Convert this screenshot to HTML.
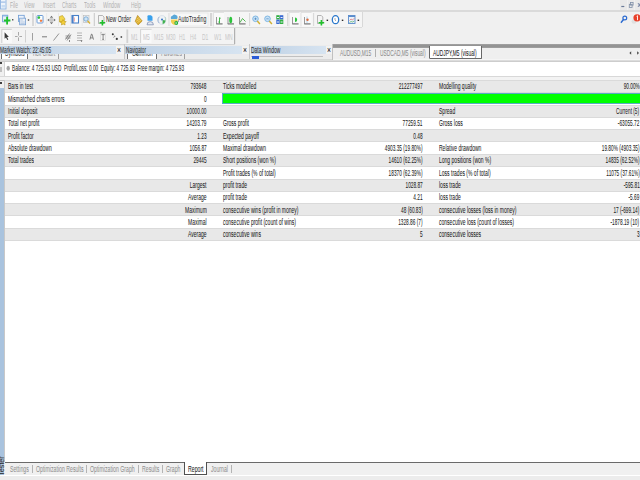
<!DOCTYPE html>
<html><head><meta charset="utf-8"><style>
html,body{margin:0;padding:0;width:640px;height:480px;overflow:hidden;background:#f0f0f0}
body>div,body>svg{position:absolute}
.t{position:absolute;white-space:nowrap;line-height:10px;-webkit-text-stroke:0.05px currentColor;font-family:"Liberation Sans",sans-serif}
</style></head><body>
<div style="left:0px;top:0px;width:640px;height:480px;background:#f0f0f0"></div>
<div style="left:0px;top:0px;width:640px;height:11px;background:#f0f0f0"></div>
<div style="left:0px;top:10px;width:640px;height:2px;background:#dadada"></div>
<svg style="left:0;top:0" width="7" height="10"><rect x="0.5" y="-0.5" width="5.5" height="9.5" fill="#eef4fb" stroke="#8fb3e0" stroke-width="0.9"/><rect x="1" y="1.5" width="4.5" height="1.2" fill="#9dbde6"/><rect x="1.5" y="5" width="3.5" height="2.5" fill="#c8dcf2"/></svg>
<div class="t" style="left:10px;top:0px;font-size:9px;color:#b0b0b0;transform:scaleX(0.54);transform-origin:0 0;-webkit-text-stroke:0">File</div>
<div class="t" style="left:24px;top:0px;font-size:9px;color:#b0b0b0;transform:scaleX(0.54);transform-origin:0 0;-webkit-text-stroke:0">View</div>
<div class="t" style="left:43px;top:0px;font-size:9px;color:#b0b0b0;transform:scaleX(0.54);transform-origin:0 0;-webkit-text-stroke:0">Insert</div>
<div class="t" style="left:62px;top:0px;font-size:9px;color:#b0b0b0;transform:scaleX(0.54);transform-origin:0 0;-webkit-text-stroke:0">Charts</div>
<div class="t" style="left:84px;top:0px;font-size:9px;color:#b0b0b0;transform:scaleX(0.54);transform-origin:0 0;-webkit-text-stroke:0">Tools</div>
<div class="t" style="left:103px;top:0px;font-size:9px;color:#b0b0b0;transform:scaleX(0.54);transform-origin:0 0;-webkit-text-stroke:0">Window</div>
<div class="t" style="left:131px;top:0px;font-size:9px;color:#b0b0b0;transform:scaleX(0.54);transform-origin:0 0;-webkit-text-stroke:0">Help</div>
<div style="left:619.5px;top:0px;width:7.5px;height:10px;background:#e9e9e9"></div>
<div style="left:627.5px;top:0px;width:6.5px;height:10px;background:#e9e9e9"></div>
<div style="left:635px;top:0px;width:5px;height:10px;background:#e9e9e9"></div>
<svg style="left:610px;top:0" width="30" height="10"><path d="M11.3 6.5h3" stroke="#6a7a98" stroke-width="1.2"/><rect x="20.5" y="2.5" width="2.6" height="2.6" fill="none" stroke="#8090a8" stroke-width="0.8"/><rect x="19.3" y="4.3" width="2.8" height="3.2" fill="none" stroke="#8090a8" stroke-width="0.8"/><path d="M28 3l2.5 4M30.5 3l-2.5 4" stroke="#7080a0" stroke-width="0.9"/></svg>
<div style="left:0px;top:12px;width:362px;height:15px;background:#f5f5f5"></div>
<div style="left:361.5px;top:12px;width:0.8px;height:15px;background:#d8d8d8"></div>
<div style="left:0px;top:27px;width:362px;height:1px;background:#dcdcdc"></div>
<div style="left:0px;top:28px;width:235px;height:16px;background:#f3f3f3"></div>
<div style="left:234px;top:28px;width:1px;height:16px;background:#b4b4b4"></div>
<div style="left:0px;top:44px;width:235px;height:1px;background:#d6d6d6"></div>
<svg style="left:0;top:0;position:absolute" width="640" height="45" viewBox="0 0 640 45"><rect x="2.6" y="15.2" width="5.2" height="6.6" fill="#e4eef8" stroke="#6a9ad4" stroke-width="0.8"/><rect x="2.6" y="15.2" width="5.2" height="1.2" fill="#8ab2e0"/><path d="M6.2 16.8h1.8v2.6h2.4v2.2h-2.4v2.9h-1.8v-2.9h-2.3v-2.2h2.3z" fill="#1fc12b"/><rect x="12" y="19.2" width="1.4" height="1.2" fill="#303030"/><rect x="18.4" y="15.3" width="5.8" height="6.2" fill="#eef3fa" stroke="#6a9ad4" stroke-width="0.8"/><rect x="19.6" y="18.2" width="6" height="6.6" fill="#e8eef6" stroke="#7aa2d4" stroke-width="0.8"/><path d="M20.3 20h2.5M20.3 22h4.5M20.3 23.6h4.5" stroke="#9ab6d8" stroke-width="0.6"/><rect x="27.8" y="19.4" width="1.4" height="1.2" fill="#303030"/><rect x="32" y="13" width="2" height="13" fill="#d9d9d9"/><rect x="35" y="13" width="0.6" height="13" fill="#e2e2e2"/><rect x="46.5" y="13" width="0.6" height="13" fill="#e2e2e2"/><rect x="58" y="13" width="0.6" height="13" fill="#e2e2e2"/><rect x="70" y="13" width="0.6" height="13" fill="#e2e2e2"/><rect x="81.8" y="13" width="0.6" height="13" fill="#e2e2e2"/><rect x="93.5" y="13" width="0.6" height="13" fill="#e2e2e2"/><rect x="37" y="15.5" width="6" height="7.5" rx="0.8" fill="#fff" stroke="#6a9ad6"/><circle cx="38.9" cy="17.6" r="1.3" fill="#2ec03a"/><path d="M41 19.2l1.5 1.5-1.5 1.5-1.5-1.5z" fill="#f07a3a"/><path d="M51.5 15.8l1.6 2h-3.2zM51.5 24.2l1.6-2h-3.2zM47.3 20l2-1.6v3.2zM55.7 20l-2-1.6v3.2z" fill="#6a6a6a"/><path d="M50 18.5l1.5-1 1.5 1v3l-1.5 1-1.5-1z" fill="#c8c8c8"/><path d="M59.5 16.5l3 -1 2.5 3.5 -2 4 -3.5 -1z" fill="#f2d54a" stroke="#b89a20" stroke-width="0.6"/><path d="M63 19.5l1.2 1.8 2 .3 -1.4 1.4 .3 2 -1.9-.9 -1.8.9 .3-2 -1.4-1.4 2-.3z" fill="#f4cf3a" stroke="#b08a10" stroke-width="0.5"/><rect x="72" y="15.5" width="6.5" height="7.5" fill="#fff" stroke="#4a80c8" stroke-width="1.1"/><rect x="72" y="15.5" width="1.6" height="7.5" fill="#4a80c8"/><path d="M74.4 17.5v4" stroke="#e05050" stroke-width="0.5"/><rect x="83.5" y="15.5" width="5.5" height="7" fill="#eef2f6" stroke="#b8b8b8" stroke-width="0.6"/><circle cx="86" cy="19" r="2.2" fill="#cfe4f4" stroke="#6aa0d0" stroke-width="0.8"/><path d="M87.5 20.7l2.5 2.8" stroke="#d8b030" stroke-width="1.3"/><rect x="94" y="13" width="0.8" height="13" fill="#c8c8c8"/><path d="M98.5 15.5h4l1.5 1.5v6.5h-5.5z" fill="#f4f4f4" stroke="#9a9a9a" stroke-width="0.7"/><path d="M101.6 20h1.6v2h2v1.6h-2v2h-1.6v-2h-2v-1.6h2z" fill="#1fc12b"/><path d="M137.6 15.4l4.6 5.6-4.1 3.9-2.9-3.6z" fill="#dcae2c" stroke="#b08418" stroke-width="0.6"/><path d="M136.6 19.2l2.6-1.8M136.2 21.2l3.9-2.2M137.4 22.6l3.6-2.4" stroke="#f6dc88" stroke-width="0.6"/><path d="M147.5 16.2q0-1 1-1h2.5l1.5 1.5v4h-5z" fill="#38a0ec"/><path d="M147 24.8q0-3.2 3.2-3.2t3.2 3.2z" fill="#e4e8f0" stroke="#8090b4" stroke-width="0.8"/><ellipse cx="162" cy="20" rx="3.8" ry="4.4" fill="#eef2f6" stroke="#c4d0dc" stroke-width="0.5"/><path d="M159.2 17a4 4 0 0 0 0 6" stroke="#90aad0" stroke-width="0.8" fill="none"/><path d="M162.6 20v4.2q2.6-.6 3.2-3.6z" fill="#40b050"/><path d="M165 17a4 4 0 0 1 .6 3" stroke="#a0c8b0" stroke-width="0.7" fill="none"/><circle cx="162" cy="19.6" r="1" fill="#3070c0"/><rect x="168.5" y="13" width="0.8" height="13" fill="#dadada"/><rect x="170" y="13" width="38" height="13" fill="#f8f8f8" stroke="#e2e2e2" stroke-width="0.6"/><path d="M171 19q-.8-3 1.8-3.5 1.2-1.8 3 -.6 2 .2 1.8 2.6 .2 1.2-1 1.5z" fill="#5aa8d8"/><path d="M171 19.5h6.5v2.5q-1 2.6-3.2 3 -2.3-.4-3.3-3z" fill="#f0d050"/><circle cx="176.3" cy="23" r="1.9" fill="#22b03a"/><path d="M175.7 22v2l1.4-1z" fill="#fff"/><rect x="210" y="13" width="2.2" height="13" fill="#d6d6d6"/><rect x="213.5" y="12.5" width="10.5" height="14" fill="#f9f9f9"/><path d="M213.5 26.5v-14h10.5" stroke="#dcdcdc" stroke-width="0.8" fill="none"/><path d="M216.5 17v7h6" stroke="#707070" stroke-width="0.7" fill="none"/><path d="M216.0 23.8h6.5" stroke="#8a8a8a" stroke-width="1"/><path d="M219.5 17.5v6M219.5 18.2h1.2M218.3 22h1.2" stroke="#30b83a" stroke-width="0.9"/><path d="M228 17v7h6" stroke="#707070" stroke-width="0.7" fill="none"/><path d="M227.5 23.8h6.5" stroke="#8a8a8a" stroke-width="1"/><ellipse cx="230.7" cy="20" rx="1.5" ry="3.3" fill="#2cc43c"/><path d="M239.5 17v7h6" stroke="#707070" stroke-width="0.7" fill="none"/><path d="M239.0 23.8h6.5" stroke="#8a8a8a" stroke-width="1"/><path d="M240 22.5l2.5-4 3 3" stroke="#40b040" stroke-width="0.9" fill="none"/><rect x="249.3" y="13" width="0.8" height="13" fill="#cfcfcf"/><circle cx="255.5" cy="18.8" r="2.8" fill="#c8e2f6" stroke="#6aaadc" stroke-width="0.8"/><path d="M257.3 21l2.6 3" stroke="#d0b030" stroke-width="1.4"/><circle cx="267.5" cy="18.8" r="2.8" fill="#c8e2f6" stroke="#6aaadc" stroke-width="0.8"/><path d="M269.3 21l2.6 3" stroke="#d0b030" stroke-width="1.4"/><path d="M254.3 18.8h2.4M255.5 17.6v2.4" stroke="#3a7ab8" stroke-width="0.6"/><path d="M266.3 18.8h2.4" stroke="#3a7ab8" stroke-width="0.6"/><rect x="276.3" y="15.2" width="3.4" height="4.2" fill="#30b040"/><rect x="279.9" y="15.2" width="3.4" height="4.2" fill="#3a6ad0"/><rect x="276.3" y="19.6" width="3.4" height="4.4" fill="#3a6ad0"/><rect x="279.9" y="19.6" width="3.4" height="4.4" fill="#30b040"/><path d="M277 17.5h2M280.6 17.5h2M277 22h2M280.6 22h2" stroke="#e8f0ff" stroke-width="1"/><rect x="287.3" y="13" width="0.8" height="13" fill="#cfcfcf"/><rect x="289" y="12.5" width="10.5" height="14" fill="#f9f9f9"/><path d="M289 26.5v-14h10.5" stroke="#dcdcdc" stroke-width="0.8" fill="none"/><rect x="301" y="12.5" width="10.5" height="14" fill="#f9f9f9"/><path d="M301 26.5v-14h10.5" stroke="#dcdcdc" stroke-width="0.8" fill="none"/><path d="M292.5 17v7h6" stroke="#707070" stroke-width="0.7" fill="none"/><path d="M292.0 23.8h6.5" stroke="#8a8a8a" stroke-width="1"/><path d="M295 17.5a2.2 2.2 0 0 1 0 4.4z" fill="#2cc43c"/><path d="M304.5 17v7h6" stroke="#707070" stroke-width="0.7" fill="none"/><path d="M304.0 23.8h6.5" stroke="#8a8a8a" stroke-width="1"/><rect x="306" y="16.5" width="2" height="6.5" fill="#d6e6f2"/><circle cx="307.5" cy="19.8" r="1.2" fill="#e06a3a"/><rect x="313.3" y="13" width="0.8" height="13" fill="#cfcfcf"/><path d="M317.5 15.5h3.8l1.5 1.5v6.5h-5.3z" fill="#f4f4f4" stroke="#9a9a9a" stroke-width="0.7"/><path d="M320.6 20h1.6v2h2v1.6h-2v2h-1.6v-2h-2v-1.6h2z" fill="#1fc12b"/><rect x="326.6" y="19.6" width="1.5" height="1.4" fill="#2a2a2a"/><ellipse cx="335.5" cy="19.7" rx="3.2" ry="4" fill="#ffffff" stroke="#2a78cc" stroke-width="1.3"/><path d="M335 18v2l1 1" stroke="#606060" stroke-width="0.5" fill="none"/><rect x="341.8" y="19.6" width="1.5" height="1.4" fill="#2a2a2a"/><rect x="348.5" y="15.5" width="6.5" height="8" fill="#eaf2fa" stroke="#5a8ccc" stroke-width="0.9"/><rect x="348.5" y="15.5" width="6.5" height="1.5" fill="#5a8ccc"/><path d="M349.5 20.5l1.5-1.5 1.5 1 1.8-1.8" stroke="#e05050" stroke-width="0.6" fill="none"/><path d="M349.5 22.5l1.5-1 1.5 .5 1.8-1" stroke="#30a040" stroke-width="0.6" fill="none"/><rect x="357.6" y="19.6" width="1.5" height="1.4" fill="#2a2a2a"/><circle cx="624.8" cy="18" r="1.9" fill="none" stroke="#2a6ad0" stroke-width="1.2"/><path d="M623.5 19.5l-2.6 3.3" stroke="#2a6ad0" stroke-width="1.4"/><ellipse cx="634" cy="21.5" rx="2.5" ry="2.2" fill="#e0e0e0"/><circle cx="637" cy="17.8" r="3.6" fill="#e8402a"/><path d="M636.6 16.3l0.9-0.6v4.5" stroke="#fff" stroke-width="0.9" fill="none"/><rect x="1.5" y="29" width="10.5" height="14" fill="#f9f9f9"/><path d="M1.8 43v-13.7h10" stroke="#c0c0c0" stroke-width="0.8" fill="none"/><path d="M4.6 32.2v6.6l1.4-1.3 1.3 2.5 1-.5-1.3-2.4h1.9z" fill="#3a3a3a"/><path d="M18.5 32v3.6M18.5 37.4v3.6M15 36.5h2.6M19.4 36.5h2.6" stroke="#a0a0a0" stroke-width="0.9"/><rect x="25.2" y="30" width="0.8" height="12.5" fill="#c8c8c8"/><path d="M32.5 33v7.5" stroke="#8a8a8a" stroke-width="0.8"/><path d="M42 36.8h5" stroke="#7a7a7a" stroke-width="1"/><path d="M53.5 40.5l5.5-7" stroke="#7a7a7a" stroke-width="0.8"/><path d="M65.5 39.5l4-6M67 40.5l4-6M65.5 36h5M65.5 38h5" stroke="#6a6a6a" stroke-width="0.7"/><path d="M69.5 40v2" stroke="#6a6a6a" stroke-width="0.8"/><path d="M77 33h5M77 35.5h5M77 38h5M77 40.5h5" stroke="#8a8a8a" stroke-width="0.6"/><path d="M80.5 40.5h2l-1 1.5z" fill="#5a5a5a"/><path d="M89.9 39.6l1.5-5.4h0.6l1.5 5.4M90.5 37.9h2.4" stroke="#6a6a6a" stroke-width="0.8" fill="none"/><rect x="100.5" y="33.2" width="5.2" height="7.2" fill="#f4f4f4" stroke="#cfcfcf" stroke-width="0.5"/><path d="M101.4 34.6h3.4M103.1 34.6v4.8M102.3 39.4h1.6" stroke="#5a5a5a" stroke-width="0.7"/><path d="M100.2 32.4h1.8" stroke="#a0a0a0" stroke-width="0.5"/><circle cx="112.8" cy="34.3" r="1" fill="#3a3a3a"/><circle cx="114.6" cy="36.4" r="0.8" fill="#9a9a9a"/><circle cx="116.8" cy="38.9" r="1.1" fill="#3a3a3a"/><circle cx="113.6" cy="37.5" r="0.5" fill="#b0b0b0"/><rect x="120.6" y="36.3" width="1.5" height="1.4" fill="#2a2a2a"/><rect x="126.4" y="29.5" width="1.8" height="13.5" fill="#d2d2d2"/><rect x="140.4" y="29" width="11.2" height="14" fill="#f9f9f9"/><path d="M140.6 43v-13.7h11" stroke="#c8c8c8" stroke-width="0.8" fill="none"/><rect x="234.2" y="28" width="1" height="16" fill="#b0b0b0"/></svg>
<div class="t" style="left:106px;top:13.8px;font-size:8.6px;color:#303030;transform:scaleX(0.6);transform-origin:0 0;">New Order</div>
<div class="t" style="left:178px;top:13.8px;font-size:8.6px;color:#303030;transform:scaleX(0.61);transform-origin:0 0;">AutoTrading</div>
<div class="t" style="left:131px;top:31.5px;font-size:8.5px;color:#c8c8c8;transform:scaleX(0.58);transform-origin:0 0;-webkit-text-stroke:0">M1</div>
<div class="t" style="left:143px;top:31.5px;font-size:8.5px;color:#c8c8c8;transform:scaleX(0.58);transform-origin:0 0;-webkit-text-stroke:0">M5</div>
<div class="t" style="left:154px;top:31.5px;font-size:8.5px;color:#c8c8c8;transform:scaleX(0.58);transform-origin:0 0;-webkit-text-stroke:0">M15</div>
<div class="t" style="left:166px;top:31.5px;font-size:8.5px;color:#c8c8c8;transform:scaleX(0.58);transform-origin:0 0;-webkit-text-stroke:0">M30</div>
<div class="t" style="left:179px;top:31.5px;font-size:8.5px;color:#c8c8c8;transform:scaleX(0.58);transform-origin:0 0;-webkit-text-stroke:0">H1</div>
<div class="t" style="left:190px;top:31.5px;font-size:8.5px;color:#c8c8c8;transform:scaleX(0.58);transform-origin:0 0;-webkit-text-stroke:0">H4</div>
<div class="t" style="left:202px;top:31.5px;font-size:8.5px;color:#c8c8c8;transform:scaleX(0.58);transform-origin:0 0;-webkit-text-stroke:0">D1</div>
<div class="t" style="left:214px;top:31.5px;font-size:8.5px;color:#c8c8c8;transform:scaleX(0.58);transform-origin:0 0;-webkit-text-stroke:0">W1</div>
<div class="t" style="left:225px;top:31.5px;font-size:8.5px;color:#c8c8c8;transform:scaleX(0.58);transform-origin:0 0;-webkit-text-stroke:0">MN</div>
<div style="left:0px;top:45px;width:640px;height:15px;background:#ececec"></div>
<div style="left:0px;top:54px;width:124px;height:5px;background:#f0f0f0"></div>
<div style="left:1px;top:53.5px;width:27px;height:5px;background:#fff;border-left:1px solid #707070;border-right:1px solid #707070;box-sizing:border-box;overflow:hidden"><div class="t" style="left:3px;top:-5.5px;font-size:8.5px;color:#303030;transform:scaleX(0.6);transform-origin:0 0">Symbols</div></div>
<div style="left:28px;top:53.5px;width:31px;height:5px;border-right:1px solid #a0a0a0;box-sizing:border-box;overflow:hidden"><div class="t" style="left:4px;top:-5.5px;font-size:8.5px;color:#909090;transform:scaleX(0.6);transform-origin:0 0">Tick Chart</div></div>
<div style="left:0px;top:45.5px;width:116px;height:8.5px;background:linear-gradient(to right,#bccfe3,#d7e4f1)"></div>
<div class="t" style="left:0px;top:44.5px;font-size:8.5px;color:#303030;transform:scaleX(0.57);transform-origin:0 0;">Market Watch: 22:45:05</div>
<div style="left:116px;top:45.5px;width:8px;height:8.5px;background:#f2f2f2"></div>
<div style="left:124px;top:44px;width:1px;height:16px;background:#c8c8c8"></div>
<div style="left:127px;top:53.5px;width:30px;height:5px;background:#fff;border-left:1px solid #707070;border-right:1px solid #707070;box-sizing:border-box;overflow:hidden"><div class="t" style="left:4px;top:-5.5px;font-size:8.5px;color:#303030;transform:scaleX(0.6);transform-origin:0 0">Common</div></div>
<div style="left:157px;top:53.5px;width:28px;height:5px;border-right:1px solid #a0a0a0;box-sizing:border-box;overflow:hidden"><div class="t" style="left:4px;top:-5.5px;font-size:8.5px;color:#909090;transform:scaleX(0.6);transform-origin:0 0">Favorites</div></div>
<div style="left:125px;top:45.5px;width:117px;height:8.5px;background:linear-gradient(to right,#bccfe3,#d7e4f1)"></div>
<div class="t" style="left:126px;top:44.5px;font-size:8.5px;color:#303030;transform:scaleX(0.55);transform-origin:0 0;">Navigator</div>
<div style="left:242px;top:45.5px;width:7px;height:8.5px;background:#f2f2f2"></div>
<div style="left:249px;top:44px;width:1px;height:16px;background:#c8c8c8"></div>
<div style="left:250.5px;top:45.5px;width:75px;height:8.5px;background:linear-gradient(to right,#bccfe3,#d7e4f1)"></div>
<div class="t" style="left:251px;top:44.5px;font-size:8.5px;color:#303030;transform:scaleX(0.58);transform-origin:0 0;">Data Window</div>
<div style="left:325.5px;top:45.5px;width:6px;height:8.5px;background:#f2f2f2"></div>
<div style="left:251px;top:56px;width:72px;height:0.8px;background:#c0c0c0"></div>
<div style="left:252px;top:56px;width:7px;height:2.5px;background:#2a5bd7"></div>
<div class="t" style="left:116.5px;top:44.5px;font-size:9px;color:#202020;transform:scaleX(0.75);transform-origin:0 0;">&#215;</div>
<div class="t" style="left:243px;top:44.5px;font-size:9px;color:#202020;transform:scaleX(0.75);transform-origin:0 0;">&#215;</div>
<div class="t" style="left:326.5px;top:44.5px;font-size:9px;color:#202020;transform:scaleX(0.75);transform-origin:0 0;">&#215;</div>
<div style="left:332px;top:44px;width:1px;height:16px;background:#c0c0c0"></div>
<div style="left:0px;top:59px;width:332px;height:1px;background:#d8d8d8"></div>
<div style="left:333px;top:44px;width:307px;height:4px;background:linear-gradient(#a4a4a4,#8e8e8e 50%,#a2a2a2)"></div>
<div style="left:333px;top:48px;width:307px;height:11px;background:#efefef"></div>
<div style="left:333px;top:59px;width:307px;height:1px;background:#f5f5f5"></div>
<div class="t" style="left:340px;top:48px;font-size:8.5px;color:#8c8c8c;transform:scaleX(0.57);transform-origin:0 0;">AUDUSD,M15</div>
<div style="left:375px;top:49px;width:1px;height:8px;background:#b0b0b0"></div>
<div class="t" style="left:380px;top:48px;font-size:8.5px;color:#8c8c8c;transform:scaleX(0.57);transform-origin:0 0;">USDCAD,M5 (visual)</div>
<div style="left:429px;top:46px;width:53px;height:13px;background:#ffffff;border:1px solid #686868;border-top:none;border-radius:0 0 1.5px 1.5px;box-sizing:border-box"></div>
<div class="t" style="left:433px;top:48.3px;font-size:8.5px;color:#202020;transform:scaleX(0.57);transform-origin:0 0;">AUDJPY,M5 (visual)</div>
<svg style="left:628px;top:50px" width="12" height="6"><path d="M3.2 1.2v3.6l-1.8-1.8z" fill="#404040"/><path d="M9.2 1.2v3.6l1.8-1.8z" fill="#404040"/></svg>
<div style="left:0px;top:60px;width:640px;height:1px;background:#dcdcdc"></div>
<div style="left:0px;top:61px;width:640px;height:1px;background:#cdcdcd"></div>
<div style="left:5px;top:62px;width:635px;height:14px;background:#ffffff"></div>
<div style="left:0px;top:76px;width:640px;height:1px;background:#d8d8d8"></div>
<div style="left:0px;top:77px;width:640px;height:3px;background:#f3f3f3"></div>
<svg style="left:6px;top:65px" width="5" height="7"><ellipse cx="2.2" cy="3.2" rx="1.7" ry="2.5" fill="#a4a4a4"/></svg>
<div class="t" style="left:12px;top:63px;font-size:8.7px;color:#202020;transform:scaleX(0.544);transform-origin:0 0;">Balance: 4 725.93 USD&nbsp; Profit/Loss: 0.00&nbsp; Equity: 4 725.93&nbsp; Free margin: 4 725.93</div>
<div style="left:0px;top:62px;width:2px;height:2px;background:#404040"></div>
<div style="left:0px;top:67px;width:2px;height:5px;background:#c0c0c0"></div>
<div style="left:4px;top:62px;width:1px;height:14px;background:#d4d4d4"></div>
<div style="left:0px;top:80px;width:640px;height:1px;background:#c2c2c2"></div>
<div style="left:5px;top:81px;width:635px;height:381px;background:#ffffff"></div>
<div style="left:4px;top:80px;width:1px;height:382px;background:#c8c8c8"></div>
<div style="left:0px;top:82px;width:2px;height:2px;background:#404040"></div>
<div style="left:0px;top:88px;width:4px;height:387px;background:#a9c3de"></div>
<div style="left:5px;top:80.0px;width:635px;height:13px;background:#e8e8e8;border-top:1px solid #dadada;border-bottom:1px solid #dadada;box-sizing:border-box"></div>
<div class="t" style="left:8px;top:81.2px;font-size:8.5px;color:#202020;transform:scaleX(0.59);transform-origin:0 0;">Bars in test</div>
<div class="t" style="right:433.2px;top:81.2px;font-size:8.5px;color:#202020;transform:scaleX(0.56);transform-origin:100% 0;">793648</div>
<div class="t" style="left:223px;top:81.2px;font-size:8.5px;color:#202020;transform:scaleX(0.59);transform-origin:0 0;">Ticks modelled</div>
<div class="t" style="right:217.5px;top:81.2px;font-size:8.5px;color:#202020;transform:scaleX(0.56);transform-origin:100% 0;">212277497</div>
<div class="t" style="left:439px;top:81.2px;font-size:8.5px;color:#202020;transform:scaleX(0.59);transform-origin:0 0;">Modelling quality</div>
<div class="t" style="right:0.5px;top:81.2px;font-size:8.5px;color:#202020;transform:scaleX(0.56);transform-origin:100% 0;">90.00%</div>
<div class="t" style="left:8px;top:93.53px;font-size:8.5px;color:#202020;transform:scaleX(0.59);transform-origin:0 0;">Mismatched charts errors</div>
<div class="t" style="right:433.2px;top:93.53px;font-size:8.5px;color:#202020;transform:scaleX(0.56);transform-origin:100% 0;">0</div>
<div style="left:222px;top:93px;width:418px;height:11px;background:#00ff00;border:1px solid #58acc4;border-right:none;box-sizing:border-box"></div>
<div style="left:5px;top:104.66px;width:635px;height:13px;background:#e8e8e8;border-top:1px solid #dadada;border-bottom:1px solid #dadada;box-sizing:border-box"></div>
<div class="t" style="left:8px;top:105.86px;font-size:8.5px;color:#202020;transform:scaleX(0.59);transform-origin:0 0;">Initial deposit</div>
<div class="t" style="right:433.2px;top:105.86px;font-size:8.5px;color:#202020;transform:scaleX(0.56);transform-origin:100% 0;">10000.00</div>
<div class="t" style="left:439px;top:105.86px;font-size:8.5px;color:#202020;transform:scaleX(0.59);transform-origin:0 0;">Spread</div>
<div class="t" style="right:0.5px;top:105.86px;font-size:8.5px;color:#202020;transform:scaleX(0.56);transform-origin:100% 0;">Current (5)</div>
<div class="t" style="left:8px;top:118.19000000000001px;font-size:8.5px;color:#202020;transform:scaleX(0.59);transform-origin:0 0;">Total net profit</div>
<div class="t" style="right:433.2px;top:118.19000000000001px;font-size:8.5px;color:#202020;transform:scaleX(0.56);transform-origin:100% 0;">14203.79</div>
<div class="t" style="left:223px;top:118.19000000000001px;font-size:8.5px;color:#202020;transform:scaleX(0.59);transform-origin:0 0;">Gross profit</div>
<div class="t" style="right:217.5px;top:118.19000000000001px;font-size:8.5px;color:#202020;transform:scaleX(0.56);transform-origin:100% 0;">77259.51</div>
<div class="t" style="left:439px;top:118.19000000000001px;font-size:8.5px;color:#202020;transform:scaleX(0.59);transform-origin:0 0;">Gross loss</div>
<div class="t" style="right:0.5px;top:118.19000000000001px;font-size:8.5px;color:#202020;transform:scaleX(0.56);transform-origin:100% 0;">-63055.72</div>
<div style="left:5px;top:129.32px;width:635px;height:13px;background:#e8e8e8;border-top:1px solid #dadada;border-bottom:1px solid #dadada;box-sizing:border-box"></div>
<div class="t" style="left:8px;top:130.51999999999998px;font-size:8.5px;color:#202020;transform:scaleX(0.59);transform-origin:0 0;">Profit factor</div>
<div class="t" style="right:433.2px;top:130.51999999999998px;font-size:8.5px;color:#202020;transform:scaleX(0.56);transform-origin:100% 0;">1.23</div>
<div class="t" style="left:223px;top:130.51999999999998px;font-size:8.5px;color:#202020;transform:scaleX(0.59);transform-origin:0 0;">Expected payoff</div>
<div class="t" style="right:217.5px;top:130.51999999999998px;font-size:8.5px;color:#202020;transform:scaleX(0.56);transform-origin:100% 0;">0.48</div>
<div class="t" style="left:8px;top:142.85px;font-size:8.5px;color:#202020;transform:scaleX(0.59);transform-origin:0 0;">Absolute drawdown</div>
<div class="t" style="right:433.2px;top:142.85px;font-size:8.5px;color:#202020;transform:scaleX(0.56);transform-origin:100% 0;">1056.87</div>
<div class="t" style="left:223px;top:142.85px;font-size:8.5px;color:#202020;transform:scaleX(0.59);transform-origin:0 0;">Maximal drawdown</div>
<div class="t" style="right:217.5px;top:142.85px;font-size:8.5px;color:#202020;transform:scaleX(0.56);transform-origin:100% 0;">4903.35 (19.80%)</div>
<div class="t" style="left:439px;top:142.85px;font-size:8.5px;color:#202020;transform:scaleX(0.59);transform-origin:0 0;">Relative drawdown</div>
<div class="t" style="right:0.5px;top:142.85px;font-size:8.5px;color:#202020;transform:scaleX(0.56);transform-origin:100% 0;">19.80% (4903.35)</div>
<div style="left:5px;top:153.98px;width:635px;height:13px;background:#e8e8e8;border-top:1px solid #dadada;border-bottom:1px solid #dadada;box-sizing:border-box"></div>
<div class="t" style="left:8px;top:155.18px;font-size:8.5px;color:#202020;transform:scaleX(0.59);transform-origin:0 0;">Total trades</div>
<div class="t" style="right:433.2px;top:155.18px;font-size:8.5px;color:#202020;transform:scaleX(0.56);transform-origin:100% 0;">29445</div>
<div class="t" style="left:223px;top:155.18px;font-size:8.5px;color:#202020;transform:scaleX(0.59);transform-origin:0 0;">Short positions (won %)</div>
<div class="t" style="right:217.5px;top:155.18px;font-size:8.5px;color:#202020;transform:scaleX(0.56);transform-origin:100% 0;">14610 (62.25%)</div>
<div class="t" style="left:439px;top:155.18px;font-size:8.5px;color:#202020;transform:scaleX(0.59);transform-origin:0 0;">Long positions (won %)</div>
<div class="t" style="right:0.5px;top:155.18px;font-size:8.5px;color:#202020;transform:scaleX(0.56);transform-origin:100% 0;">14835 (62.52%)</div>
<div class="t" style="left:223px;top:167.51px;font-size:8.5px;color:#202020;transform:scaleX(0.59);transform-origin:0 0;">Profit trades (% of total)</div>
<div class="t" style="right:217.5px;top:167.51px;font-size:8.5px;color:#202020;transform:scaleX(0.56);transform-origin:100% 0;">18370 (62.39%)</div>
<div class="t" style="left:439px;top:167.51px;font-size:8.5px;color:#202020;transform:scaleX(0.59);transform-origin:0 0;">Loss trades (% of total)</div>
<div class="t" style="right:0.5px;top:167.51px;font-size:8.5px;color:#202020;transform:scaleX(0.56);transform-origin:100% 0;">11075 (37.61%)</div>
<div style="left:5px;top:178.64px;width:635px;height:13px;background:#e8e8e8;border-top:1px solid #dadada;border-bottom:1px solid #dadada;box-sizing:border-box"></div>
<div class="t" style="right:433.2px;top:179.83999999999997px;font-size:8.5px;color:#202020;transform:scaleX(0.59);transform-origin:100% 0;">Largest</div>
<div class="t" style="left:223px;top:179.83999999999997px;font-size:8.5px;color:#202020;transform:scaleX(0.59);transform-origin:0 0;">profit trade</div>
<div class="t" style="right:217.5px;top:179.83999999999997px;font-size:8.5px;color:#202020;transform:scaleX(0.56);transform-origin:100% 0;">1028.87</div>
<div class="t" style="left:439px;top:179.83999999999997px;font-size:8.5px;color:#202020;transform:scaleX(0.59);transform-origin:0 0;">loss trade</div>
<div class="t" style="right:0.5px;top:179.83999999999997px;font-size:8.5px;color:#202020;transform:scaleX(0.56);transform-origin:100% 0;">-595.81</div>
<div class="t" style="right:433.2px;top:192.17px;font-size:8.5px;color:#202020;transform:scaleX(0.59);transform-origin:100% 0;">Average</div>
<div class="t" style="left:223px;top:192.17px;font-size:8.5px;color:#202020;transform:scaleX(0.59);transform-origin:0 0;">profit trade</div>
<div class="t" style="right:217.5px;top:192.17px;font-size:8.5px;color:#202020;transform:scaleX(0.56);transform-origin:100% 0;">4.21</div>
<div class="t" style="left:439px;top:192.17px;font-size:8.5px;color:#202020;transform:scaleX(0.59);transform-origin:0 0;">loss trade</div>
<div class="t" style="right:0.5px;top:192.17px;font-size:8.5px;color:#202020;transform:scaleX(0.56);transform-origin:100% 0;">-5.69</div>
<div style="left:5px;top:203.3px;width:635px;height:13px;background:#e8e8e8;border-top:1px solid #dadada;border-bottom:1px solid #dadada;box-sizing:border-box"></div>
<div class="t" style="right:433.2px;top:204.5px;font-size:8.5px;color:#202020;transform:scaleX(0.59);transform-origin:100% 0;">Maximum</div>
<div class="t" style="left:223px;top:204.5px;font-size:8.5px;color:#202020;transform:scaleX(0.59);transform-origin:0 0;">consecutive wins (profit in money)</div>
<div class="t" style="right:217.5px;top:204.5px;font-size:8.5px;color:#202020;transform:scaleX(0.56);transform-origin:100% 0;">48 (60.83)</div>
<div class="t" style="left:439px;top:204.5px;font-size:8.5px;color:#202020;transform:scaleX(0.59);transform-origin:0 0;">consecutive losses (loss in money)</div>
<div class="t" style="right:0.5px;top:204.5px;font-size:8.5px;color:#202020;transform:scaleX(0.56);transform-origin:100% 0;">17 (-699.14)</div>
<div class="t" style="right:433.2px;top:216.82999999999998px;font-size:8.5px;color:#202020;transform:scaleX(0.59);transform-origin:100% 0;">Maximal</div>
<div class="t" style="left:223px;top:216.82999999999998px;font-size:8.5px;color:#202020;transform:scaleX(0.59);transform-origin:0 0;">consecutive profit (count of wins)</div>
<div class="t" style="right:217.5px;top:216.82999999999998px;font-size:8.5px;color:#202020;transform:scaleX(0.56);transform-origin:100% 0;">1328.86 (7)</div>
<div class="t" style="left:439px;top:216.82999999999998px;font-size:8.5px;color:#202020;transform:scaleX(0.59);transform-origin:0 0;">consecutive loss (count of losses)</div>
<div class="t" style="right:0.5px;top:216.82999999999998px;font-size:8.5px;color:#202020;transform:scaleX(0.56);transform-origin:100% 0;">-1878.19 (10)</div>
<div style="left:5px;top:227.96px;width:635px;height:13px;background:#e8e8e8;border-top:1px solid #dadada;border-bottom:1px solid #dadada;box-sizing:border-box"></div>
<div class="t" style="right:433.2px;top:229.16px;font-size:8.5px;color:#202020;transform:scaleX(0.59);transform-origin:100% 0;">Average</div>
<div class="t" style="left:223px;top:229.16px;font-size:8.5px;color:#202020;transform:scaleX(0.59);transform-origin:0 0;">consecutive wins</div>
<div class="t" style="right:217.5px;top:229.16px;font-size:8.5px;color:#202020;transform:scaleX(0.56);transform-origin:100% 0;">5</div>
<div class="t" style="left:439px;top:229.16px;font-size:8.5px;color:#202020;transform:scaleX(0.59);transform-origin:0 0;">consecutive losses</div>
<div class="t" style="right:0.5px;top:229.16px;font-size:8.5px;color:#202020;transform:scaleX(0.56);transform-origin:100% 0;">3</div>
<div style="left:5px;top:462px;width:635px;height:1.5px;background:#6a6a6a"></div>
<div style="left:5px;top:463px;width:635px;height:12px;background:#f0f0f0"></div>
<div style="left:0px;top:475px;width:640px;height:1px;background:#ffffff"></div>
<div style="left:0px;top:476px;width:640px;height:4px;background:#ececec"></div>
<div class="t" style="left:10px;top:464px;font-size:8.5px;color:#909090;transform:scaleX(0.61);transform-origin:0 0;">Settings</div>
<div class="t" style="left:36px;top:464px;font-size:8.5px;color:#909090;transform:scaleX(0.61);transform-origin:0 0;">Optimization Results</div>
<div class="t" style="left:90px;top:464px;font-size:8.5px;color:#909090;transform:scaleX(0.61);transform-origin:0 0;">Optimization Graph</div>
<div class="t" style="left:142px;top:464px;font-size:8.5px;color:#909090;transform:scaleX(0.61);transform-origin:0 0;">Results</div>
<div class="t" style="left:166px;top:464px;font-size:8.5px;color:#909090;transform:scaleX(0.61);transform-origin:0 0;">Graph</div>
<div style="left:32.3px;top:465px;width:1px;height:8px;background:#b4b4b4"></div>
<div style="left:86px;top:465px;width:1px;height:8px;background:#b4b4b4"></div>
<div style="left:138.3px;top:465px;width:1px;height:8px;background:#b4b4b4"></div>
<div style="left:162px;top:465px;width:1px;height:8px;background:#b4b4b4"></div>
<div style="left:231px;top:465px;width:1px;height:8px;background:#b4b4b4"></div>
<div style="left:184px;top:462px;width:23px;height:13px;background:#ffffff;border:1px solid #505050;border-top:none;box-sizing:border-box"></div>
<div class="t" style="left:188px;top:464px;font-size:8.5px;color:#202020;transform:scaleX(0.61);transform-origin:0 0;">Report</div>
<div class="t" style="left:211px;top:464px;font-size:8.5px;color:#909090;transform:scaleX(0.61);transform-origin:0 0;">Journal</div>
<div class="t" style="left:-9.5px;top:462.5px;width:22px;text-align:center;font-size:7px;line-height:6px;color:#2a2a2a;transform:rotate(-90deg) scaleX(1.02);transform-origin:50% 50%">Tester</div>
</body></html>
